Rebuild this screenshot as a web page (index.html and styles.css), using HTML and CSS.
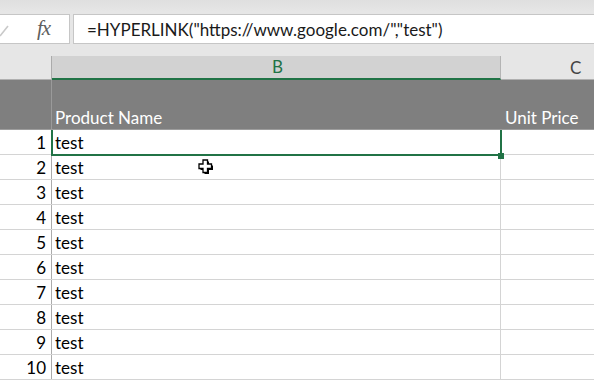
FILE: index.html
```html
<!DOCTYPE html>
<html lang="en">
<head>
    <meta charset="UTF-8">
    <title>Sheet</title>
    <link rel="stylesheet" href="styles.css">
</head>
<body>
    <div class="formula-bar">
        <div class="name-box">
            <svg class="enter-mark" width="12" height="14" viewBox="0 0 12 14">
                <path d="M0 12 L8 2" stroke="#c9c9c9" stroke-width="1.6" fill="none"/>
            </svg>
            <span class="fx">fx</span>
        </div>
        <div class="formula-input">=HYPERLINK("https://www.google.com/","test")</div>
    </div>

    <div class="sheet">
        <div class="row col-head">
            <div class="rh"></div>
            <div class="cb">B</div>
            <div class="cc">C</div>
        </div>
        <div class="row title-row">
            <div class="rh"></div>
            <div class="cb">Product Name</div>
            <div class="cc">Unit Price</div>
        </div>
        <div class="row">
            <div class="rh">1</div>
            <div class="cb selected">test<span class="handle"></span></div>
            <div class="cc"></div>
        </div>
        <div class="row"><div class="rh">2</div><div class="cb">test</div><div class="cc"></div></div>
        <div class="row"><div class="rh">3</div><div class="cb">test</div><div class="cc"></div></div>
        <div class="row"><div class="rh">4</div><div class="cb">test</div><div class="cc"></div></div>
        <div class="row"><div class="rh">5</div><div class="cb">test</div><div class="cc"></div></div>
        <div class="row"><div class="rh">6</div><div class="cb">test</div><div class="cc"></div></div>
        <div class="row"><div class="rh">7</div><div class="cb">test</div><div class="cc"></div></div>
        <div class="row"><div class="rh">8</div><div class="cb">test</div><div class="cc"></div></div>
        <div class="row"><div class="rh">9</div><div class="cb">test</div><div class="cc"></div></div>
        <div class="row"><div class="rh">10</div><div class="cb">test</div><div class="cc"></div></div>

        <!-- mouse pointer -->
        <svg class="pointer" width="17" height="17" viewBox="0 0 17 17">
            <path d="M6.5 2.5 H11 V6.5 H15 V11 H11 V15 H6.5 V11 H2.5 V6.5 H6.5 Z" fill="#000"/>
            <path d="M5 1 H9.5 V5 H13.5 V9.5 H9.5 V13.5 H5 V9.5 H1 V5 H5 Z" fill="#fff" stroke="#000" stroke-width="1.3"/>
        </svg>
    </div>
</body>
</html>
```

FILE: styles.css
```css
body {
    margin: 0;
    width: 594px;
    height: 392px;
    overflow: hidden;
    background: #fff;
    font-family: Lato, "Open Sans", sans-serif;
    font-size: 17px;
    color: #000;
}
.formula-bar {
    display: flex;
    gap: 3px;
    padding: 14px 0 12px;
    background: linear-gradient(#dfdfdf, #e6e6e6 12px);
}
.name-box {
    position: relative;
    flex: none;
    width: 69px;
    height: 28px;
    margin-left: -1px;
    border: 1px solid #c6c6c6;
    background: #fff;
}
.enter-mark {
    position: absolute;
    left: 0;
    top: 9px;
}
.fx {
    position: absolute;
    left: 37px;
    top: 1px;
    font-family: "Liberation Serif", serif;
    font-style: italic;
    font-size: 21px;
    color: #5f5f5f;
    letter-spacing: -1px;
}
.formula-input {
    flex: 1;
    height: 28px;
    padding-left: 13px;
    border: 1px solid #c6c6c6;
    border-right: none;
    background: #fff;
    line-height: 30px;
    white-space: nowrap;
    color: #1a1a1a;
}

.sheet {
    position: relative;
}
.row {
    display: flex;
    height: 24px;
    border-bottom: 1px solid #d4d4d4;
    line-height: 1;
}
.rh,
.cb,
.cc {
    display: flex;
    align-items: flex-end;
    padding-bottom: 3px;
    box-sizing: border-box;
    white-space: nowrap;
}
.rh {
    width: 52px;
    justify-content: flex-end;
    padding-right: 5px;
    border-right: 1px solid #ababab;
}
.cb {
    position: relative;
    width: 449px;
    padding-left: 3px;
    border-right: 1px solid #d4d4d4;
}
.cc {
    flex: 1;
    padding-left: 4px;
}

.col-head {
    height: 24px;
    border-bottom: none;
    background: #e6e6e6;
}
.col-head .rh,
.col-head .cc {
    border-bottom: 1px solid #b0b0b0;
}
.col-head .cb {
    justify-content: center;
    background: #d2d2d2;
    border-right-color: #b4b4b4;
    border-bottom: 2px solid #217346;
    color: #217346;
}
.col-head .cc {
    padding-left: 69px;
    color: #444;
}

.title-row {
    height: 49px;
    background: #7f7f7f;
    border-bottom-color: #9d9d9d;
    color: #fff;
}
.title-row .rh {
    border-right-color: #9a9a9a;
}
.title-row .cb {
    border-right-color: #7f7f7f;
}

.selected::after {
    content: "";
    position: absolute;
    left: -1px;
    right: -2px;
    top: 0;
    bottom: -2px;
    border: 2px solid #217346;
    border-top: none;
}
.handle {
    position: absolute;
    right: -4px;
    bottom: -5px;
    width: 6px;
    height: 6px;
    background: #217346;
    z-index: 1;
}

.pointer {
    position: absolute;
    left: 198px;
    top: 103px;
}
```
